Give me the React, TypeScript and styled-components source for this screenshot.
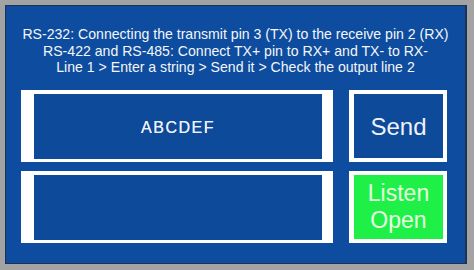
import React from "react";
import styled, { createGlobalStyle } from "styled-components";

const GlobalStyle = createGlobalStyle`
  html, body {
    margin: 0;
    padding: 0;
    background: #a3a3a3;
    width: 474px;
    height: 270px;
    overflow: hidden;
  }
`;

const Frame = styled.div`
  width: 474px;
  height: 270px;
  box-sizing: border-box;
  padding: 5px 7px 6px 5px;
  background: #a3a3a3;
`;

const Panel = styled.div`
  height: 100%;
  box-sizing: border-box;
  background: #0d4c9e;
  border: 1px solid #1b3256;
  border-right-width: 2px;
  display: flex;
  flex-direction: column;
  font-family: "Liberation Sans", Arial, sans-serif;
  color: #ffffff;
`;

const Info = styled.div`
  padding-top: 20px;
  height: 64px;
  box-sizing: border-box;
  text-align: center;
  font-size: 14.1px;
  line-height: 16.5px;
  color: #f4f6fa;
`;

const Grid = styled.div`
  display: grid;
  grid-template-columns: 312px 98px;
  grid-template-rows: 72px 72px;
  column-gap: 16px;
  row-gap: 9px;
  margin-top: 20px;
  padding-left: 15px;
`;

const Field = styled.div`
  box-sizing: border-box;
  border-style: solid;
  border-color: #ffffff;
  border-width: 4px 11px 3px 13px;
  background: #0e4a9a;
  display: flex;
  align-items: center;
  justify-content: center;
  padding-top: 2px;
  font-size: 16px;
  letter-spacing: 1.5px;
  color: #eef1f8;
  text-shadow: 0 0 0.4px #eef1f8;
`;

const Button = styled.div<{ $on?: boolean }>`
  box-sizing: border-box;
  border: 4px solid #ffffff;
  border-left-width: 5px;
  background: ${(p) => (p.$on ? "#1ff048" : "#0e4a9a")};
  color: ${(p) => (p.$on ? "#e6ffe0" : "#f0f2f8")};
  display: flex;
  align-items: center;
  justify-content: center;
  text-align: center;
  font-size: ${(p) => (p.$on ? "23px" : "24px")};
  line-height: 27px;
`;

export default function App() {
  return (
    <>
      <GlobalStyle />
      <Frame>
        <Panel>
          <Info>
            RS-232: Connecting the transmit pin 3 (TX) to the receive pin 2 (RX)
            <br />
            RS-422 and RS-485: Connect TX+ pin to RX+ and TX- to RX-
            <br />
            Line 1 &gt; Enter a string &gt; Send it &gt; Check the output line 2
          </Info>
          <Grid>
            <Field>ABCDEF</Field>
            <Button>Send</Button>
            <Field />
            <Button $on>
              Listen
              <br />
              Open
            </Button>
          </Grid>
        </Panel>
      </Frame>
    </>
  );
}
